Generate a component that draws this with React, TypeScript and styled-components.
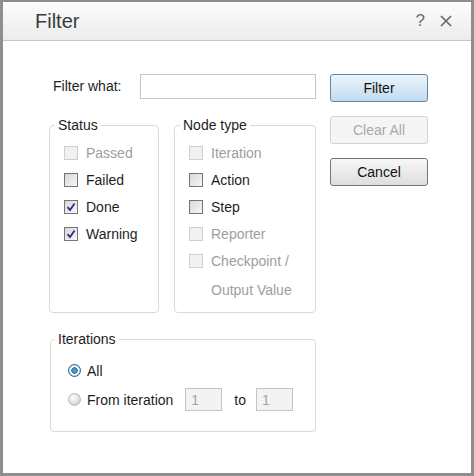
import { ReactElement } from 'react'
import styled, { createGlobalStyle } from 'styled-components'

const GlobalStyle = createGlobalStyle`
	html, body {
		margin: 0;
		padding: 0;
		background: #ffffff;
	}
	body {
		font-family: "Liberation Sans", Arial, sans-serif;
	}
`

const Window = styled.div`
	box-sizing: border-box;
	width: 474px;
	height: 476px;
	border: 3px solid #8e8e8e;
	border-top-width: 2px;
	background: #ffffff;
	display: flex;
	flex-direction: column;
`

const TitleBar = styled.div`
	height: 39px;
	box-sizing: border-box;
	display: flex;
	align-items: center;
	padding: 0 19px 0 32px;
	background: linear-gradient(#fcfcfc, #ececec);
	border-bottom: 1px solid #c6c6c6;
`

const Title = styled.div`
	flex: 1;
	font-size: 20px;
	color: #3a3a3a;
`

const TitleIcon = styled.span`
	font-size: 17px;
	color: #6a6a6a;
	margin-left: 15px;
	display: flex;
	align-items: center;
`

const Body = styled.div`
	display: flex;
	padding: 32px 0 0 46px;
	gap: 14px;
`

const LeftCol = styled.div`
	display: flex;
	flex-direction: column;
	width: 267px;
`

const FilterRow = styled.div`
	display: flex;
	align-items: center;
	height: 26px;
	gap: 19px;
	padding-left: 4px;
`

const Label = styled.span<{ $disabled?: boolean }>`
	font-size: 14px;
	color: ${(p) => (p.$disabled ? '#9e9e9e' : '#1e1e1e')};
	white-space: nowrap;
`

const TextInput = styled.div`
	width: 176px;
	height: 25px;
	box-sizing: border-box;
	border: 1px solid #c4c4c4;
	background: #ffffff;
`

const GroupsRow = styled.div`
	display: flex;
	gap: 15px;
	margin-top: 18px;
`

const Group = styled.fieldset<{ $width: number; $height: number }>`
	box-sizing: border-box;
	width: ${(p) => p.$width}px;
	height: ${(p) => p.$height}px;
	margin: 0;
	padding: 0 0 0 14px;
	border: 1px solid #dadada;
	border-radius: 4px;
	min-width: 0;
`

const Legend = styled.legend<{ $shift?: number }>`
	font-size: 14px;
	line-height: 16px;
	color: #1e1e1e;
	padding: 0 3px;
	margin-left: ${(p) => p.$shift ?? -9}px;
`

const OptionList = styled.div`
	display: flex;
	flex-direction: column;
	padding-top: 6px;
`

const Option = styled.div`
	display: flex;
	align-items: center;
	height: 27px;
	gap: 8px;
`

const SubLine = styled.div`
	height: 29px;
	display: flex;
	align-items: center;
	padding-left: 22px;
	margin-top: 1px;
`

const Box = styled.span<{ $disabled?: boolean }>`
	box-sizing: border-box;
	width: 14px;
	height: 14px;
	border: 1px solid ${(p) => (p.$disabled ? '#cfcfcf' : '#757575')};
	background: ${(p) =>
		p.$disabled ? '#f1f1f1' : 'linear-gradient(135deg, #d8d8d8, #f7f7f7)'};
	display: flex;
	align-items: center;
	justify-content: center;
	flex-shrink: 0;
`

const Check = () => (
	<svg width="10" height="10" viewBox="0 0 10 10">
		<path d="M1.5 5.2 L4 8 L8.6 1.4" fill="none" stroke="#2b2b8c" strokeWidth="1.8" />
	</svg>
)

const CheckOption = ({
	label,
	checked,
	disabled,
}: {
	label: string
	checked?: boolean
	disabled?: boolean
}): ReactElement => (
	<Option>
		<Box $disabled={disabled}>{checked && <Check />}</Box>
		<Label $disabled={disabled}>{label}</Label>
	</Option>
)

const IterationsGroup = styled(Group)`
	margin-top: 18px;
	margin-left: 1px;
	padding-left: 17px;
`

const RadioList = styled(OptionList)`
	padding-top: 9px;
`

const RadioRow = styled.div`
	display: flex;
	align-items: center;
	height: 29px;
	gap: 6px;
`

const Radio = styled.span<{ $on?: boolean }>`
	box-sizing: border-box;
	width: 13px;
	height: 13px;
	border-radius: 50%;
	flex-shrink: 0;
	border: 1px solid ${(p) => (p.$on ? '#2f5f88' : '#b8b8b8')};
	background: ${(p) =>
		p.$on
			? 'radial-gradient(circle, #5fa6d8 0, #2f78b0 3px, #ffffff 3.5px, #ffffff 4.2px, #c8dbe8 5px)'
			: 'radial-gradient(circle at 40% 35%, #ffffff 0, #e2e2e2 5px, #cfcfcf 7px)'};
`

const SmallInput = styled.div<{ $offset?: number }>`
	box-sizing: border-box;
	width: 37px;
	height: 23px;
	border: 1px solid #c4c4c4;
	background: #f3f3f3;
	font-size: 14px;
	color: #a4a4a4;
	display: flex;
	align-items: center;
	padding-left: 5px;
	margin-left: ${(p) => p.$offset ?? 0}px;
`

const ToLabel = styled(Label)`
	margin: 0 4px 0 6px;
`

const RightCol = styled.div`
	display: flex;
	flex-direction: column;
	gap: 14px;
	padding-top: 1px;
`

const Button = styled.div<{ $variant: 'primary' | 'disabled' | 'normal' }>`
	box-sizing: border-box;
	width: 98px;
	height: 28px;
	border-radius: 3px;
	display: flex;
	align-items: center;
	justify-content: center;
	font-size: 14px;
	color: ${(p) => (p.$variant === 'disabled' ? '#a9a9a9' : '#111111')};
	border: 1px solid
		${(p) =>
			p.$variant === 'primary' ? '#5d87a9' : p.$variant === 'disabled' ? '#d2d2d2' : '#767676'};
	background: ${(p) =>
		p.$variant === 'primary'
			? 'linear-gradient(#eaf4fb, #c2dcef)'
			: p.$variant === 'disabled'
			? '#f5f5f5'
			: 'linear-gradient(#f7f7f7, #dedede)'};
`

const App = (): ReactElement => {
	return (
		<>
			<GlobalStyle />
			<Window>
				<TitleBar>
					<Title>Filter</Title>
					<TitleIcon>?</TitleIcon>
					<TitleIcon>
						<svg width="12" height="12" viewBox="0 0 12 12">
							<path d="M1 1 L11 11 M11 1 L1 11" stroke="#6a6a6a" strokeWidth="1.7" />
						</svg>
					</TitleIcon>
				</TitleBar>
				<Body>
					<LeftCol>
						<FilterRow>
							<Label>Filter what:</Label>
							<TextInput />
						</FilterRow>
						<GroupsRow>
							<Group $width={110} $height={196}>
								<Legend>Status</Legend>
								<OptionList>
									<CheckOption label="Passed" disabled />
									<CheckOption label="Failed" />
									<CheckOption label="Done" checked />
									<CheckOption label="Warning" checked />
								</OptionList>
							</Group>
							<Group $width={142} $height={196}>
								<Legend>Node type</Legend>
								<OptionList>
									<CheckOption label="Iteration" disabled />
									<CheckOption label="Action" />
									<CheckOption label="Step" />
									<CheckOption label="Reporter" disabled />
									<CheckOption label="Checkpoint /" disabled />
									<SubLine>
										<Label $disabled>Output Value</Label>
									</SubLine>
								</OptionList>
							</Group>
						</GroupsRow>
						<IterationsGroup $width={266} $height={101}>
							<Legend $shift={-13}>Iterations</Legend>
							<RadioList>
								<RadioRow>
									<Radio $on />
									<Label>All</Label>
								</RadioRow>
								<RadioRow>
									<Radio />
									<Label>From iteration</Label>
									<SmallInput $offset={6}>1</SmallInput>
									<ToLabel>to</ToLabel>
									<SmallInput>1</SmallInput>
								</RadioRow>
							</RadioList>
						</IterationsGroup>
					</LeftCol>
					<RightCol>
						<Button $variant="primary">Filter</Button>
						<Button $variant="disabled">Clear All</Button>
						<Button $variant="normal">Cancel</Button>
					</RightCol>
				</Body>
			</Window>
		</>
	)
}

export default App
